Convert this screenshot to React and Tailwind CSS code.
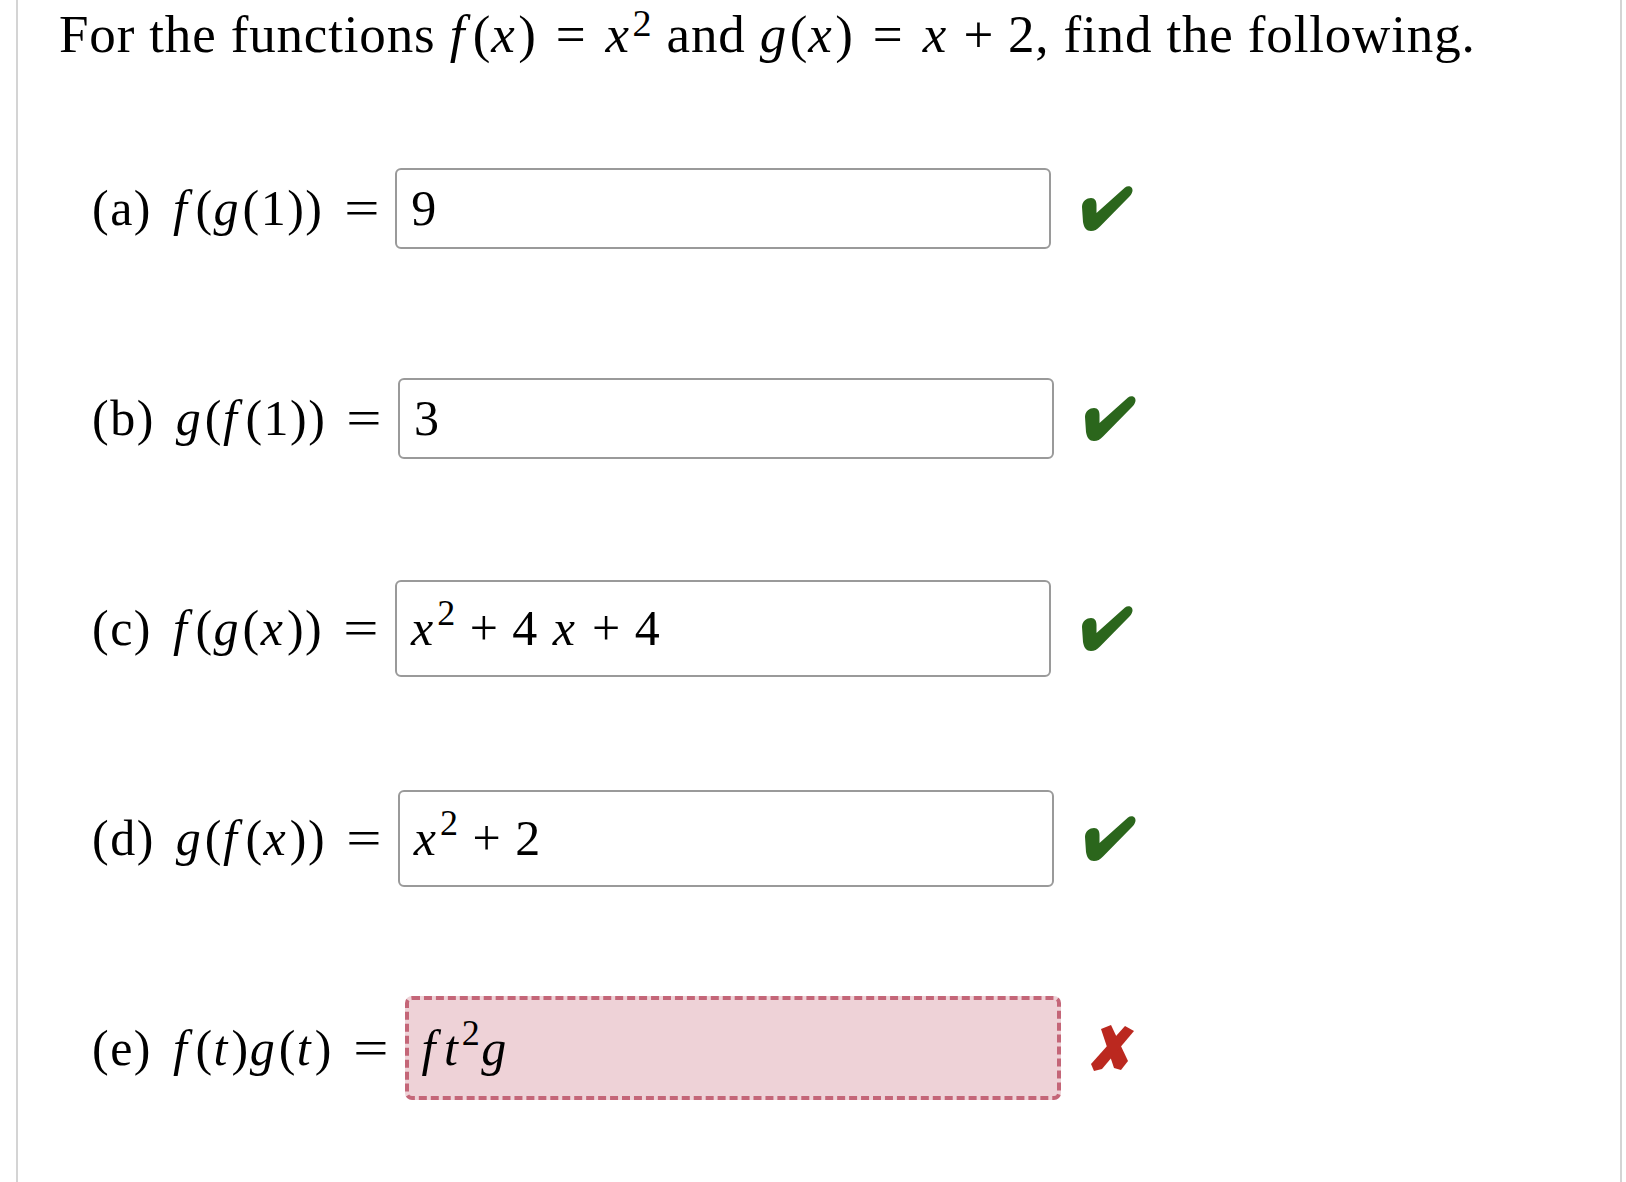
import React from 'react'

const serif = "font-['Liberation_Serif','Times_New_Roman',serif]"

// math italic letters: a little right room so they don't collide with ( or the next letter
function F(){ return <span className="mr-[0.14em] italic">f</span> }
function M({children}){ return <span className="mr-[0.05em] italic">{children}</span> }
function Eq(){ return <span className="mx-[0.36em]">=</span> }
function Plus(){ return <span className="mx-[0.26em]">+</span> }
function Sq(){ return <sup className="relative -top-[0.42em] text-[72%]">2</sup> }

function Check(){
  return (
    <svg width="54" height="48" viewBox="0 0 54 48" className="shrink-0">
      <path
        d="M1 23C1 17 6 14 10 14C14 14 15.5 17 15.5 21L15.5 29L44 3.5C47 1 52 2 51.5 7C51 10 49 12 47 14L19 42.5C16 45.5 13.5 47 10 47C5.5 47 3 44 2 38Z"
        fill="#2b661c"
      />
    </svg>
  )
}

function Cross(){
  return (
    <svg width="44" height="48" viewBox="0 0 44 48" className="shrink-0">
      <path d="M10 5L20 1L37 37L30 46L23 44Z" fill="#bb281f" />
      <path d="M34 2L43 7L11 45L3 47L0 40Z" fill="#bb281f" />
    </svg>
  )
}

const rows = [
  {
    label: <>(a)<span className="ml-[0.42em]"><F />(<M>g</M>(1))</span></>,
    answer: <>9</>,
    box: 'h-[81px]',
    ok: true,
  },
  {
    label: <>(b)<span className="ml-[0.42em]"><M>g</M>(<F />(1))</span></>,
    answer: <>3</>,
    box: 'h-[81px]',
    ok: true,
  },
  {
    label: <>(c)<span className="ml-[0.42em]"><F />(<M>g</M>(<M>x</M>))</span></>,
    answer: <><M>x</M><Sq /><Plus />4 <M>x</M><Plus />4</>,
    box: 'h-[97px]',
    ok: true,
  },
  {
    label: <>(d)<span className="ml-[0.42em]"><M>g</M>(<F />(<M>x</M>))</span></>,
    answer: <><M>x</M><Sq /><Plus />2</>,
    box: 'h-[97px]',
    ok: true,
  },
  {
    label: <>(e)<span className="ml-[0.42em]"><F />(<M>t</M>)<M>g</M>(<M>t</M>)</span></>,
    answer: <><F /><M>t</M><Sq /><M>g</M></>,
    box: 'h-[104px]',
    ok: false,
  },
]

function Row({row}){
  return (
    <div className="flex h-[210px] items-center pl-[74px]">
      <div className="whitespace-nowrap text-[50px] tracking-[0.03em]">
        {row.label}
        <span className="ml-[0.48em] mr-[0.36em] inline-block scale-x-[1.25]">=</span>
      </div>
      {row.ok ? (
        <div className={`flex w-[656px] shrink-0 items-center whitespace-pre rounded-[6px] border-2 border-[#9a9a9a] pl-[14px] text-[50px] tracking-[0.03em] ${serif} ${row.box}`}>
          {row.answer}
        </div>
      ) : (
        <div className={`flex w-[656px] shrink-0 items-center whitespace-pre rounded-[7px] border-4 border-dashed border-[#c46678] bg-[#eed2d7] pl-[13px] text-[50px] tracking-[0.03em] ${serif} ${row.box}`}>
          {row.answer}
        </div>
      )}
      <div className="ml-[30px]">
        {row.ok ? <Check /> : <Cross />}
      </div>
    </div>
  )
}

export default function App(){
  return (
    <div className="min-h-[1182px] bg-white">
      <div className={`ml-[16px] mr-[4px] min-h-[1182px] border-x-2 border-[#d4d4d4] text-black ${serif}`}>
        <p className="pl-[41px] pt-[4px] text-[53px] leading-[61px] tracking-[0.016em] whitespace-nowrap">
          For the functions <F />(<M>x</M>)<Eq /><M>x</M><Sq /> and <M>g</M>(<M>x</M>)<Eq /><M>x</M><Plus />2, find the following.
        </p>
        <div className="mt-[38px]">
          {rows.map((r, i) => <Row key={i} row={r} />)}
        </div>
      </div>
    </div>
  )
}
